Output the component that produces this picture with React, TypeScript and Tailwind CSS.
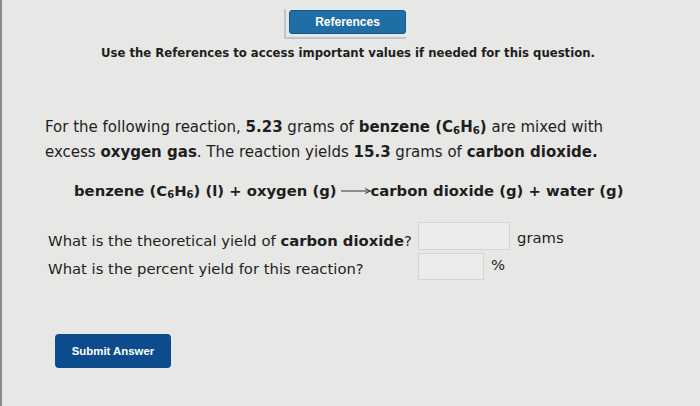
import React from 'react';

const Sub: React.FC<{ children: React.ReactNode }> = ({ children }) => (
    <sub className="text-[0.68em] relative top-[2px]">{children}</sub>
);

export default function App() {
    return (
        <div
            className="w-[700px] h-[406px] bg-[#e7e7e5] text-[#1e1e1e] border-l-2 border-[#8a8a8a] overflow-hidden"
            style={{ fontFamily: '"DejaVu Sans", Verdana, sans-serif' }}
        >
            {/* References button */}
            <div className="pl-[282px] pt-[9px]">
                <div className="inline-block pl-[3px] pb-[3px] border-l-2 border-b-2 border-[#b9c6d8]">
                    <button
                        className="w-[117px] h-[24px] rounded-[3px] bg-[#1f6ea6] text-white text-[12px] font-bold border border-[#15588a]"
                        style={{ fontFamily: '"Liberation Sans", Arial, sans-serif' }}
                    >
                        References
                    </button>
                </div>
            </div>

            <p className="pl-[99px] pt-[6px] text-[11.7px] font-bold leading-[16px]">
                Use the References to access important values if needed for this question.
            </p>

            {/* Problem text */}
            <div className="pl-[43px] pt-[54px] text-[15px] leading-[25px]">
                <p>
                    For the following reaction, <b>5.23</b> grams of <b>benzene (C<Sub>6</Sub>H<Sub>6</Sub>)</b> are mixed with
                </p>
                <p>
                    excess <b>oxygen gas</b>. The reaction yields <b>15.3</b> grams of <b>carbon dioxide.</b>
                </p>
            </div>

            <p className="pl-[72px] pt-[14px] text-[14.8px] font-bold leading-[24px]">
                benzene (C<Sub>6</Sub>H<Sub>6</Sub>) (l) + oxygen (g)
                <span className="inline-block align-middle w-[30px] ml-[4px] relative -top-[1px]">
                    <svg width="30" height="8" viewBox="0 0 30 8">
                        <line x1="0" y1="4" x2="28" y2="4" stroke="#333" strokeWidth="1" />
                        <path d="M24 1.5 L29.5 4 L24 6.5" fill="none" stroke="#333" strokeWidth="1" />
                    </svg>
                </span>
                carbon dioxide (g) + water (g)
            </p>

            {/* Questions */}
            <div className="pl-[46px] pt-[19px] text-[14.8px]">
                <div className="flex items-start">
                    <span className="w-[370px] pt-[8px]">
                        What is the theoretical yield of <b>carbon dioxide</b>?
                    </span>
                    <input className="w-[92px] h-[28px] bg-[#ebebea] border border-[#d4d4d2] outline-none" />
                    <span className="pl-[7px] pt-[5px]">grams</span>
                </div>
                <div className="flex items-start mt-[1px]">
                    <span className="w-[370px] pt-[5px]">What is the percent yield for this reaction?</span>
                    <input className="w-[66px] h-[27px] bg-[#ebebea] border border-[#d4d4d2] outline-none" />
                    <span className="pl-[7px] pt-[1px]">%</span>
                </div>
            </div>

            <div className="pl-[53px] pt-[54px]">
                <button
                    className="w-[116px] h-[34px] rounded-[4px] bg-[#0d4c8c] text-white text-[11.4px] font-bold"
                    style={{ fontFamily: '"Liberation Sans", Arial, sans-serif' }}
                >
                    Submit Answer
                </button>
            </div>
        </div>
    );
}
